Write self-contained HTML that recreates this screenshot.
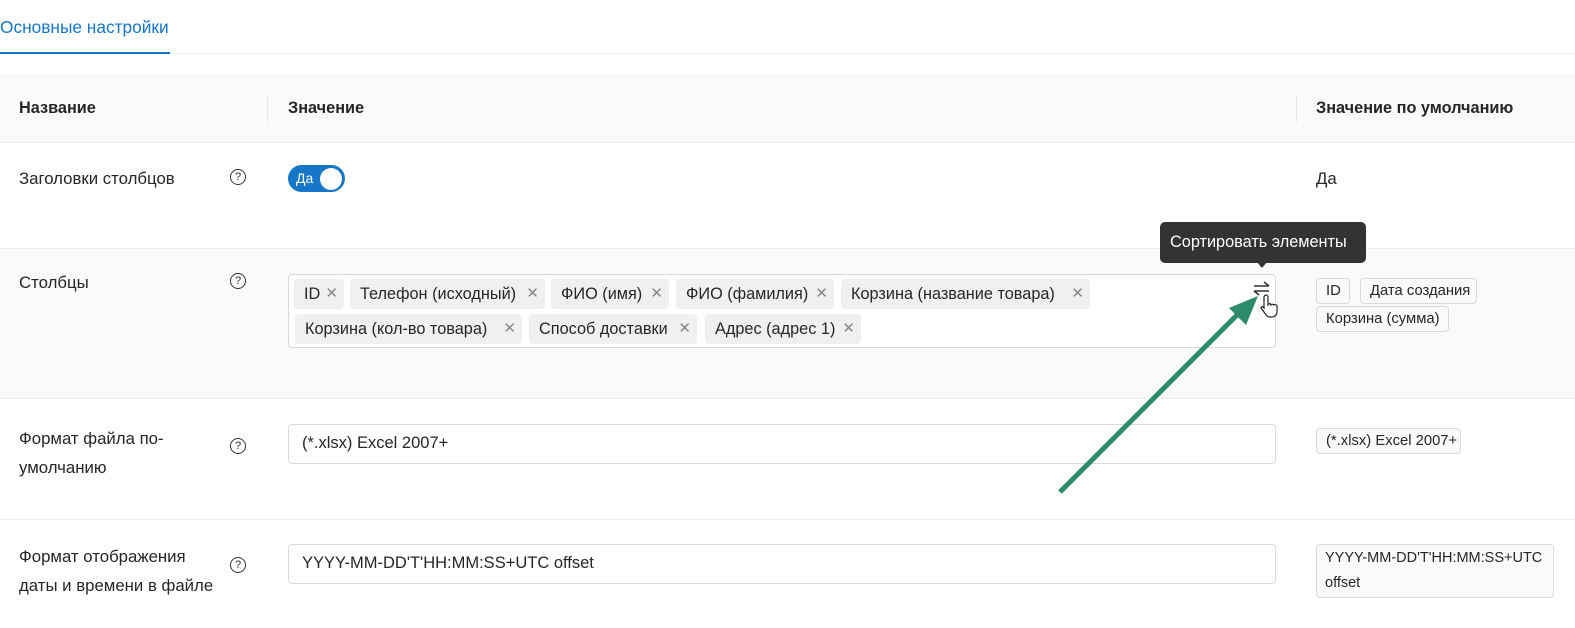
<!DOCTYPE html>
<html><head><meta charset="utf-8"><style>
*{box-sizing:border-box;margin:0;padding:0}
body{width:1575px;height:628px;overflow:hidden;background:#fff;font-family:"Liberation Sans","DejaVu Sans",sans-serif;color:#262626;font-size:15px;position:relative}
.a{position:absolute}
.t{position:absolute;white-space:nowrap}
.hl{position:absolute;left:0;right:0;height:1px;background:#eeeeee}
.q{position:absolute;width:16px;height:16px;border:1.3px solid #333;border-radius:50%;font-size:11px;text-align:center;line-height:14px;color:#333}
.inp{position:absolute;left:288px;width:988px;border:1px solid #d9d9d9;border-radius:4px;background:#fff}
.tag{position:absolute;height:30px;background:#f0f0f0;border-radius:4px;font-size:16.3px;line-height:30px;padding-left:10px;white-space:nowrap;overflow:hidden;color:#262626}
.tag span{position:absolute;right:6px;color:#888;font-size:15px}
.dt{position:absolute;border:1px solid #d9d9d9;border-radius:4px;background:#fafafa;font-size:14.8px;padding:0 9px;line-height:24px;white-space:nowrap}
.rt{font-size:16.8px}
</style></head><body>
<div class="t" style="left:0;top:17px;font-size:17.3px;color:#1677c9">Основные настройки</div>
<div class="hl" style="top:53px"></div>
<div class="a" style="left:0;top:52px;width:170px;height:2px;background:#1677c9"></div>

<div class="a" style="left:0;top:74px;width:1575px;height:68px;background:#fafafa"></div>
<div class="hl" style="top:142px"></div>
<div class="t" style="left:19px;top:99px;font-weight:bold;font-size:16.3px">Название</div>
<div class="a" style="left:267px;top:95px;width:1px;height:27px;background:#e6e6e6"></div>
<div class="t" style="left:288px;top:99px;font-weight:bold;font-size:16.3px">Значение</div>
<div class="a" style="left:1296px;top:95px;width:1px;height:27px;background:#e6e6e6"></div>
<div class="t" style="left:1316px;top:99px;font-weight:bold;font-size:16.3px">Значение по умолчанию</div>

<!-- row1 -->
<div class="t rt" style="left:19px;top:169px">Заголовки столбцов</div>
<div class="q" style="left:230px;top:169px">?</div>
<div class="a" style="left:288px;top:165px;width:57px;height:27px;border-radius:14px;background:#1677c9"></div>
<div class="t" style="left:296px;top:170px;color:#fff;font-size:14px">Да</div>
<div class="a" style="left:320px;top:168px;width:22px;height:22px;border-radius:50%;background:#fff"></div>
<div class="t rt" style="left:1316px;top:169px">Да</div>
<div class="hl" style="top:248px"></div>

<!-- row2 -->
<div class="a" style="left:0;top:249px;width:1575px;height:149px;background:#fafafa"></div>
<div class="t rt" style="left:19px;top:273px">Столбцы</div>
<div class="q" style="left:230px;top:273px">?</div>
<div class="inp" style="top:274px;height:74px"></div>
<div class="tag" style="left:294px;top:279px;width:50px">ID<span>✕</span></div>
<div class="tag" style="left:350px;top:279px;width:195px">Телефон (исходный)<span>✕</span></div>
<div class="tag" style="left:551px;top:279px;width:118px">ФИО (имя)<span>✕</span></div>
<div class="tag" style="left:676px;top:279px;width:158px">ФИО (фамилия)<span>✕</span></div>
<div class="tag" style="left:841px;top:279px;width:249px">Корзина (название товара)<span>✕</span></div>
<div class="tag" style="left:295px;top:314px;width:227px">Корзина (кол-во товара)<span>✕</span></div>
<div class="tag" style="left:529px;top:314px;width:168px">Способ доставки<span>✕</span></div>
<div class="tag" style="left:705px;top:314px;width:156px">Адрес (адрес 1)<span>✕</span></div>
<svg class="a" style="left:1252px;top:280px" width="20" height="18" viewBox="0 0 20 18"><path d="M2 6H17M12 2L17 6M2 11H17M2 11L7 15" stroke="#333" stroke-width="1.6" fill="none"/></svg>
<svg class="a" style="left:1260px;top:293px" width="22" height="26" viewBox="0 0 22 26"><path d="M6 2c1 0 2 1 2 2v8l1-1c1-1 2 0 2 1c1-1 2-1 3 0c1-1 3 0 3 1v5c0 4-2 6-6 6h-1c-3 0-4-2-6-5l-3-4c0-1 1-2 2-1l1 1V4c0-1 1-2 2-2z" fill="#fff" stroke="#222" stroke-width="1.2"/></svg>
<div class="dt" style="left:1316px;top:278px;width:34px">ID</div>
<div class="dt" style="left:1360px;top:278px;width:117px">Дата создания</div>
<div class="dt" style="left:1316px;top:306px;width:133px">Корзина (сумма)</div>
<div class="a" style="left:1160px;top:222px;width:206px;height:41px;background:#333;border-radius:5px"></div>
<div class="t" style="left:1170px;top:233px;color:#fff;font-size:16.3px">Сортировать элементы</div>
<div class="a" style="left:1257px;top:262px;width:0;height:0;border-left:5px solid transparent;border-right:5px solid transparent;border-top:6px solid #333"></div>
<div class="hl" style="top:398px"></div>

<!-- row3 -->
<div class="t rt" style="left:19px;top:424px;line-height:29px">Формат файла по-<br>умолчанию</div>
<div class="q" style="left:230px;top:438px">?</div>
<div class="inp" style="top:424px;height:40px"></div>
<div class="t" style="left:302px;top:434px;font-size:16.5px">(*.xlsx) Excel 2007+</div>
<div class="dt" style="left:1316px;top:428px;width:145px">(*.xlsx) Excel 2007+</div>
<div class="hl" style="top:519px"></div>

<!-- row4 -->
<div class="t rt" style="left:19px;top:542px;line-height:29px">Формат отображения<br>даты и времени в файле</div>
<div class="q" style="left:230px;top:557px">?</div>
<div class="inp" style="top:544px;height:40px"></div>
<div class="t" style="left:302px;top:554px;font-size:16.5px">YYYY-MM-DD'T'HH:MM:SS+UTC offset</div>
<div class="dt" style="left:1316px;top:544px;width:238px;white-space:normal;line-height:25px;padding:1px 8px;font-size:14.5px">YYYY-MM-DD'T'HH:MM:SS+UTC offset</div>

<svg class="a" style="left:0;top:0" width="1575" height="628"><line x1="1060" y1="492" x2="1240" y2="312" stroke="#2e8b6a" stroke-width="5"/><polygon points="1258,296 1229,308 1246,325" fill="#2e8b6a"/></svg>
</body></html>
